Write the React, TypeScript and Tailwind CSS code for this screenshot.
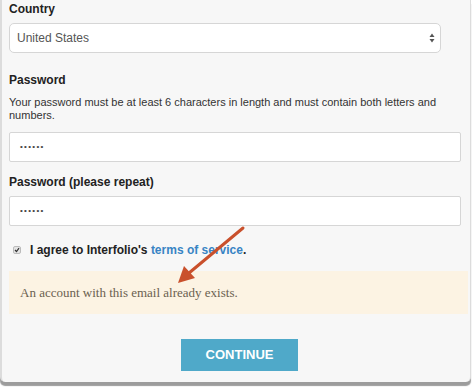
export default function App() {
  return (
    <div className="relative h-[387px] w-[474px] overflow-hidden bg-white font-['Liberation_Sans',Arial,sans-serif] text-[#222]">
      <div className="h-[382px] w-[471px] rounded-b-[5px] border-l-2 border-r border-[#dcdcdc] bg-[#f7f7f7] shadow-[0_4px_1px_#9c9c9c]">
        <div className="flex flex-col pl-[7px] pt-[1px]">
          <label className="text-[12px] font-bold leading-[16px]">Country</label>
          <div className="mt-[6px] flex h-[30px] w-[432px] items-center justify-between rounded-[5px] border border-[#d6d6d6] bg-white pl-[7px] pr-[5px]">
            <span className="text-[12px] text-[#555]">United States</span>
            <svg width="6" height="10" viewBox="0 0 6 10">
              <path d="M3 0.5 L5.5 4 L0.5 4 Z" fill="#555" />
              <path d="M3 9.5 L5.5 6 L0.5 6 Z" fill="#555" />
            </svg>
          </div>

          <label className="mt-[19px] text-[12px] font-bold leading-[16px]">Password</label>
          <p className="mt-[8px] pr-[20px] text-[11px] leading-[13px] text-[#333]">
            Your password must be at least 6 characters in length and must contain both letters and numbers.
          </p>
          <div className="mt-[10px] flex h-[30px] w-[452px] items-center rounded-[2px] border border-[#d6d6d6] bg-white pl-[10px]">
            <span className="text-[8px] tracking-[1.3px] text-[#444]">••••••</span>
          </div>

          <label className="mt-[12px] text-[12px] font-bold leading-[16px]">Password (please repeat)</label>
          <div className="mt-[6px] flex h-[30px] w-[452px] items-center rounded-[2px] border border-[#d6d6d6] bg-white pl-[10px]">
            <span className="text-[8px] tracking-[1.3px] text-[#444]">••••••</span>
          </div>

          <div className="mt-[16px] flex items-center">
            <span className="ml-[4px] flex h-[8px] w-[8px] items-center justify-center rounded-[2px] border border-[#bbb] bg-[#e4e4e4]">
              <svg width="6" height="6" viewBox="0 0 6 6">
                <path d="M1 3 L2.5 4.5 L5 1.2" stroke="#333" strokeWidth="1.2" fill="none" />
              </svg>
            </span>
            <span className="ml-[9px] text-[12px] font-bold leading-[16px]">
              I agree to Interfolio's <span className="text-[#3884c4]">terms of service</span>.
            </span>
          </div>

          <div className="mt-[13px] flex h-[43px] w-[459px] items-center bg-[#fcf3e3] pl-[11px]">
            <span className="font-['Liberation_Serif',Georgia,serif] text-[13px] text-[#6b6150]">
              An account with this email already exists.
            </span>
          </div>

          <div className="mt-[25px] flex justify-center">
            <button className="h-[32px] w-[117px] bg-[#4fa9c9] text-[13px] font-bold text-white">CONTINUE</button>
          </div>
        </div>
      </div>

      <svg className="absolute left-0 top-0" width="474" height="387" viewBox="0 0 474 387">
        <line x1="243" y1="228" x2="189" y2="273" stroke="#c9502c" strokeWidth="3" strokeLinecap="round" />
        <path d="M178 283 L184 266 L195 278 Z" fill="#c9502c" />
      </svg>
    </div>
  );
}
